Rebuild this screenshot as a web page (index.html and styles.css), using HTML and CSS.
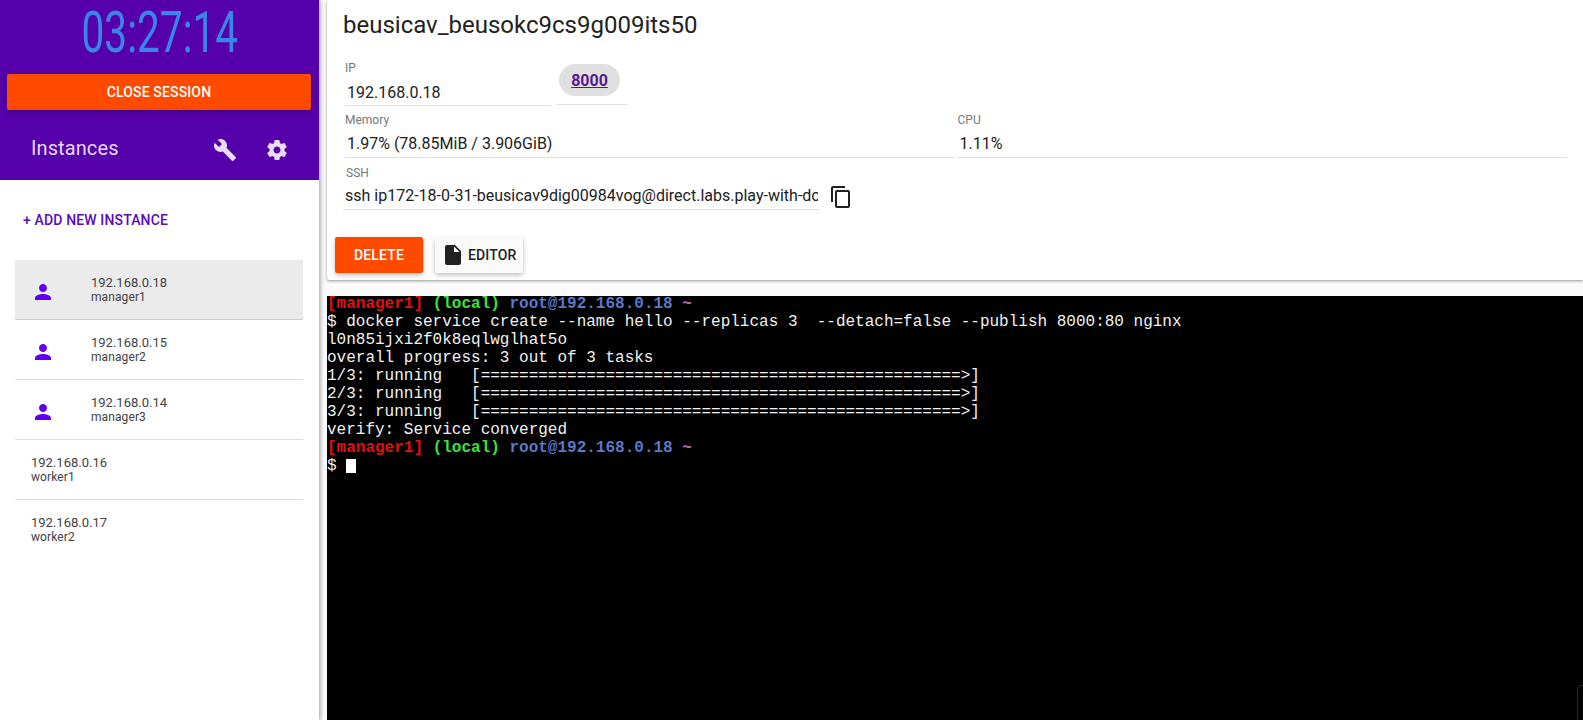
FILE: index.html
```html
<!DOCTYPE html>
<html lang="en">
<head>
<meta charset="utf-8">
<title>Play with Docker</title>
<link rel="stylesheet" href="styles.css">
</head>
<body>
<div class="app">
  <aside class="sidebar">
    <header class="side-head">
      <div class="clock"><span class="clock-text">03:27:14</span></div>
      <button class="btn btn-close">CLOSE SESSION</button>
      <div class="inst-bar">
        <span class="inst-title">Instances</span>
        <svg class="tool wrench" viewBox="0 0 24 24"><path d="M22.7 19l-9.1-9.1c.9-2.3.4-5-1.5-6.9-2-2-5-2.4-7.4-1.3L9 6 6 9 1.600 4.700C.4 7.100.9 10.100 2.900 12.100c1.900 1.900 4.600 2.400 6.900 1.500l9.100 9.100c.4.400 1 .4 1.400 0l2.300-2.300c.5-.4.5-1.100.1-1.400z"/></svg>
        <svg class="tool gear" viewBox="0 0 24 24"><path d="M19.430 12.980c.04-.32.07-.64.07-.98s-.03-.66-.07-.98l2.110-1.650c.19-.15.24-.42.12-.64l-2-3.460c-.12-.22-.39-.3-.61-.22l-2.490 1c-.52-.4-1.080-.73-1.690-.98l-.38-2.650C14.460 2.180 14.250 2 14 2h-4c-.25 0-.46.18-.49.420l-.38 2.650c-.61.25-1.170.59-1.690.98l-2.490-1c-.23-.09-.49 0-.61.220l-2 3.460c-.13.220-.07.490.12.640l2.110 1.650c-.04.320-.07.650-.07.980s.03.660.07.980l-2.110 1.650c-.19.150-.24.420-.12.640l2 3.460c.12.220.39.300.61.220l2.490-1c.52.400 1.080.730 1.690.980l.38 2.650c.03.240.24.420.49.420h4c.25 0 .46-.18.49-.42l.38-2.650c.61-.25 1.170-.59 1.690-.98l2.490 1c.23.090.49 0 .61-.22l2-3.460c.12-.22.07-.49-.12-.64l-2.110-1.650zM12 15.500c-1.930 0-3.500-1.570-3.500-3.500s1.570-3.500 3.500-3.500 3.500 1.570 3.500 3.500-1.570 3.500-3.500 3.500z"/></svg>
      </div>
    </header>
    <div class="add-row"><span class="add-link">+ ADD NEW INSTANCE</span></div>
    <ul class="inst-list">
      <li class="inst active">
        <svg class="person" viewBox="0 0 24 24"><path d="M12 12c2.210 0 4-1.790 4-4s-1.790-4-4-4-4 1.790-4 4 1.790 4 4 4zm0 2c-2.670 0-8 1.340-8 4v2h16v-2c0-2.660-5.330-4-8-4z"/></svg>
        <div class="inst-text"><div class="inst-ip">192.168.0.18</div><div class="inst-name">manager1</div></div>
      </li>
      <li class="inst">
        <svg class="person" viewBox="0 0 24 24"><path d="M12 12c2.210 0 4-1.790 4-4s-1.790-4-4-4-4 1.790-4 4 1.790 4 4 4zm0 2c-2.670 0-8 1.340-8 4v2h16v-2c0-2.660-5.330-4-8-4z"/></svg>
        <div class="inst-text"><div class="inst-ip">192.168.0.15</div><div class="inst-name">manager2</div></div>
      </li>
      <li class="inst">
        <svg class="person" viewBox="0 0 24 24"><path d="M12 12c2.210 0 4-1.790 4-4s-1.790-4-4-4-4 1.790-4 4 1.790 4 4 4zm0 2c-2.670 0-8 1.340-8 4v2h16v-2c0-2.660-5.330-4-8-4z"/></svg>
        <div class="inst-text"><div class="inst-ip">192.168.0.14</div><div class="inst-name">manager3</div></div>
      </li>
      <li class="inst">
        <div class="inst-text worker"><div class="inst-ip">192.168.0.16</div><div class="inst-name">worker1</div></div>
      </li>
      <li class="inst">
        <div class="inst-text worker"><div class="inst-ip">192.168.0.17</div><div class="inst-name">worker2</div></div>
      </li>
    </ul>
  </aside>
  <main class="main">
    <section class="card">
      <h1 class="title">beusicav_beusokc9cs9g009its50</h1>
      <div class="row row-ip">
        <div class="field f-ip"><label>IP</label><div class="val">192.168.0.18</div></div>
        <div class="field f-port"><span class="chip"><a href="#" class="port">8000</a></span></div>
      </div>
      <div class="row row-stats">
        <div class="field f-half"><label>Memory</label><div class="val">1.97% (78.85MiB / 3.906GiB)</div></div>
        <div class="field f-half"><label>CPU</label><div class="val">1.11%</div></div>
      </div>
      <div class="row row-ssh">
        <div class="field f-ssh"><label>SSH</label><div class="val ssh">ssh ip172-18-0-31-beusicav9dig00984vog@direct.labs.play-with-docker.com</div></div>
        <svg class="copy" viewBox="0 0 24 24"><path d="M16 1H4c-1.100 0-2 .9-2 2v14h2V3h12V1zm3 4H8c-1.100 0-2 .9-2 2v14c0 1.100.9 2 2 2h11c1.100 0 2-.9 2-2V7c0-1.100-.9-2-2-2zm0 16H8V7h11v14z"/></svg>
      </div>
      <div class="actions">
        <button class="btn btn-delete">DELETE</button>
        <button class="btn btn-editor"><svg class="file" viewBox="0 0 24 24"><path d="M6 2c-1.100 0-2 .9-2 2v16c0 1.100.9 2 2 2h12c1.100 0 2-.9 2-2V8l-6-6H6zm7 7V3.500L18.500 9H13z"/></svg>EDITOR</button>
      </div>
    </section>
    <section class="term">
<pre class="term-text"><b class="r">[manager1]</b> <b class="g">(local)</b> <b class="b">root@192.168.0.18</b> <b class="m">~</b>
$ docker service create --name hello --replicas 3  --detach=false --publish 8000:80 nginx
l0n85ijxi2f0k8eqlwglhat5o
overall progress: 3 out of 3 tasks
1/3: running   [==================================================&gt;]
2/3: running   [==================================================&gt;]
3/3: running   [==================================================&gt;]
verify: Service converged
<b class="r">[manager1]</b> <b class="g">(local)</b> <b class="b">root@192.168.0.18</b> <b class="m">~</b>
$ <span class="cursor"> </span></pre>
      <div class="term-tab"></div>
    </section>
  </main>
</div>
</body>
</html>
```

FILE: styles.css
```css
* { box-sizing: border-box; }
html, body { margin: 0; height: 100%; overflow: hidden; }
body { font-family: Roboto, "Noto Sans", sans-serif; background: #fafafa; color: #212121; }
.app { display: flex; height: 720px; }

.sidebar { width: 319px; flex: none; background: #fff; box-shadow: 1px 0 4px rgba(0,0,0,.28), 3px 0 3px rgba(0,0,0,.08); position: relative; z-index: 2; }
.side-head { background: #5500aa; height: 180px; padding: 0 8px; display: flex; flex-direction: column; }
.clock { height: 74px; display: flex; justify-content: center; }
.clock-text { font-family: Roboto, sans-serif; font-weight: 400; font-size: 58px; line-height: 64px; height: 64px; color: #3b85ea; display: inline-block; transform: scaleX(.7); white-space: nowrap; }

.btn { border: 0; font-family: Roboto, sans-serif; font-weight: 500; font-size: 14px; letter-spacing: .14px; border-radius: 2px; cursor: pointer; }
.btn-close { width: 304px; height: 36px; margin-left: -1px; background: #ff4a00; color: #fff; box-shadow: 0 2px 5px rgba(0,0,0,.26); }

.inst-bar { display: flex; align-items: center; height: 70px; padding: 6px 0 0 23px; color: rgba(255,255,255,.87); }
.inst-title { font-size: 20px; font-weight: 400; flex: 1; letter-spacing: .1px; }
.tool { fill: #eadcf6; width: 24px; height: 24px; margin-top: 3px; }
.wrench { margin-right: 28px; }
.gear { margin-right: 22px; }

.add-row { height: 80px; padding-left: 23px; display: flex; align-items: center; }
.add-link { color: #5a0ab8; font-size: 14px; font-weight: 500; letter-spacing: .14px; }

.inst-list { list-style: none; margin: 0 16px 0 15px; padding: 0; }
.inst { height: 60px; border-bottom: 1px solid #ddd; display: flex; align-items: center; font-size: 13px; color: #424242; }
.inst:last-child { border-bottom: 0; }
.inst.active { background: #ebebeb; border-bottom-color: #ccc; }
.person { width: 24px; height: 24px; fill: #6200ee; margin: 4px 0 0 16px; flex: none; }
.inst-text { margin-left: 36px; line-height: 15px; }
.inst-text.worker { margin-left: 16px; }
.inst-name { font-size: 12px; letter-spacing: .1px; }

.main { flex: 1; min-width: 0; padding-left: 8px; display: flex; flex-direction: column; }
.card { height: 280px; background: #fff; padding: 0 16px 0 8px; box-shadow: 0 1px 3px rgba(0,0,0,.4); border-radius: 0 0 0 2px; }
.title { margin: 0 0 0 8px; padding-top: 10px; height: 59px; font-size: 24px; font-weight: 400; line-height: 30px; color: #212121; }

.row { display: flex; }
.field { border-bottom: 1px solid #e0e0e0; }
.field label { display: block; font-size: 12px; line-height: 14px; color: #777; padding-top: 2px; height: 16px; }
.val { font-size: 16px; line-height: 24px; color: #212121; padding: 5px 0 0 2px; height: 30px; overflow: hidden; }
.f-ip .val { padding-top: 6px; }

.row-ip { height: 47px; padding-left: 10px; }
.f-ip { width: 206px; height: 47px; }
.f-port { width: 72px; height: 46px; margin-left: 5px; padding: 5px 0 0 3px; }
.chip { display: inline-flex; align-items: center; justify-content: center; width: 61px; height: 32px; background: #e0e0e0; border-radius: 16px; }
.port { color: #551a8b; font-size: 16px; font-weight: 700; }

.row-stats { height: 52px; padding: 5px 0 0 10px; gap: 3px; }
.f-half { width: 610px; height: 47px; }
.row-ssh { height: 52px; padding: 5px 0 0 8px; align-items: flex-start; }
.f-ssh { width: 477px; height: 47px; }
.f-ssh label { padding: 3px 0 0 3px; }
.ssh { padding: 5px 0 0 2px; margin-right: 2px; white-space: nowrap; }
.copy { width: 24px; height: 24px; margin: 22px 0 0 9px; fill: #212121; }

.actions { display: flex; gap: 12px; margin-top: 27px; }
.btn-delete { width: 88px; height: 36px; background: #ff4a00; color: #fff; box-shadow: 0 2px 5px rgba(0,0,0,.26); }
.btn-editor { width: 88px; height: 36px; background: #fafafa; color: #212121; box-shadow: 0 2px 5px rgba(0,0,0,.26); display: flex; align-items: center; padding: 0 0 0 6px; }
.file { width: 24px; height: 24px; fill: #212121; margin-right: 3px; }

.term { flex: 1; margin-top: 16px; background: #000; position: relative; overflow: hidden; }
.term-text { margin: -1px 0 0; font-family: "Liberation Mono", monospace; font-size: 16px; line-height: 18px; color: #f2f2f2; white-space: pre; }
.term-text .r { color: #e01010; }
.term-text .g { color: #3ee23e; }
.term-text .b { color: #5c78c8; }
.term-text .m { color: #b070b0; }
.cursor { display: inline-block; width: 10px; height: 14px; background: #fff; vertical-align: -2px; }
.term-tab { position: absolute; right: -4px; top: 389px; width: 10px; height: 40px; border: 1px solid #2a2a2a; border-radius: 4px 0 0 0; }
```
